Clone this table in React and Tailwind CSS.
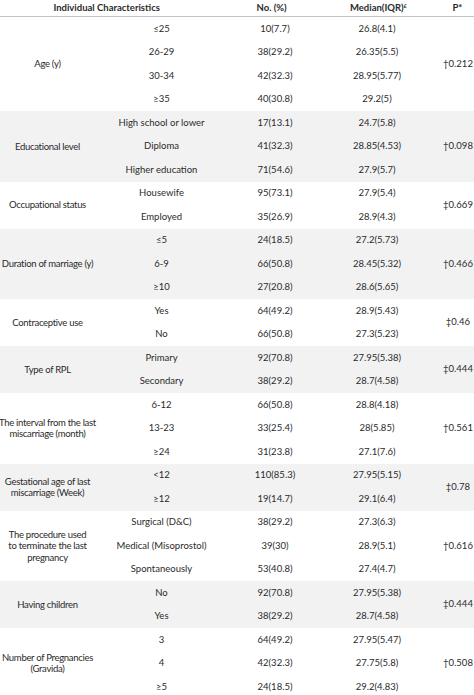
import React from "react";

const groups = [
  {
    label: ["Age (y)"],
    p: "†0.212",
    rows: [
      ["≤25", "10(7.7)", "26.8(4.1)"],
      ["26-29", "38(29.2)", "26.35(5.5)"],
      ["30-34", "42(32.3)", "28.95(5.77)"],
      ["≥35", "40(30.8)", "29.2(5)"],
    ],
  },
  {
    label: ["Educational level"],
    p: "†0.098",
    rows: [
      ["High school or lower", "17(13.1)", "24.7(5.8)"],
      ["Diploma", "41(32.3)", "28.85(4.53)"],
      ["Higher education", "71(54.6)", "27.9(5.7)"],
    ],
  },
  {
    label: ["Occupational status"],
    p: "‡0.669",
    rows: [
      ["Housewife", "95(73.1)", "27.9(5.4)"],
      ["Employed", "35(26.9)", "28.9(4.3)"],
    ],
  },
  {
    label: ["Duration of marriage (y)"],
    p: "†0.466",
    rows: [
      ["≤5", "24(18.5)", "27.2(5.73)"],
      ["6-9", "66(50.8)", "28.45(5.32)"],
      ["≥10", "27(20.8)", "28.6(5.65)"],
    ],
  },
  {
    label: ["Contraceptive use"],
    p: "‡0.46",
    rows: [
      ["Yes", "64(49.2)", "28.9(5.43)"],
      ["No", "66(50.8)", "27.3(5.23)"],
    ],
  },
  {
    label: ["Type of RPL"],
    p: "‡0.444",
    rows: [
      ["Primary", "92(70.8)", "27.95(5.38)"],
      ["Secondary", "38(29.2)", "28.7(4.58)"],
    ],
  },
  {
    label: ["The interval from the last", "miscarriage (month)"],
    p: "†0.561",
    rows: [
      ["6-12", "66(50.8)", "28.8(4.18)"],
      ["13-23", "33(25.4)", "28(5.85)"],
      ["≥24", "31(23.8)", "27.1(7.6)"],
    ],
  },
  {
    label: ["Gestational age of last", "miscarriage (Week)"],
    p: "‡0.78",
    rows: [
      ["<12", "110(85.3)", "27.95(5.15)"],
      ["≥12", "19(14.7)", "29.1(6.4)"],
    ],
  },
  {
    label: ["The procedure used", "to terminate the last", "pregnancy"],
    p: "†0.616",
    rows: [
      ["Surgical (D&C)", "38(29.2)", "27.3(6.3)"],
      ["Medical (Misoprostol)", "39(30)", "28.9(5.1)"],
      ["Spontaneously", "53(40.8)", "27.4(4.7)"],
    ],
  },
  {
    label: ["Having children"],
    p: "‡0.444",
    rows: [
      ["No", "92(70.8)", "27.95(5.38)"],
      ["Yes", "38(29.2)", "28.7(4.58)"],
    ],
  },
  {
    label: ["Number of Pregnancies", "(Gravida)"],
    p: "†0.508",
    rows: [
      ["3", "64(49.2)", "27.95(5.47)"],
      ["4", "42(32.3)", "27.75(5.8)"],
      ["≥5", "24(18.5)", "29.2(4.83)"],
    ],
  },
];

function Group({ g, shaded }) {
  return (
    <div className={"flex " + (shaded ? "bg-[#f2f2f2]" : "bg-white")}>
      <div className="w-[95px] shrink-0 flex flex-col items-center justify-center text-center leading-[11.5px] tracking-[-0.3px]">
        {g.label.map((l) => (
          <span key={l} className="whitespace-nowrap">{l}</span>
        ))}
      </div>
      <div className="flex flex-col">
        {g.rows.map((r) => (
          <div key={r[0] + r[1]} className="flex h-[23.5px] items-center">
            <div className="w-[133px] text-center whitespace-nowrap">{r[0]}</div>
            <div className="w-[94px] text-center whitespace-nowrap">{r[1]}</div>
            <div className="w-[110px] text-center whitespace-nowrap">{r[2]}</div>
          </div>
        ))}
      </div>
      <div className="w-[52px] shrink-0 flex items-center justify-center whitespace-nowrap">
        {g.p}
      </div>
    </div>
  );
}

export default function App() {
  return (
    <div className="w-[474px] h-[695px] overflow-hidden bg-white text-[#2a2a2a] text-[9.5px] font-['Lato',sans-serif]">
      <div className="w-[484px]">
        <div className="flex h-[17px] items-center border-b border-[#c4c4c4] font-bold">
          <div className="w-[216px] text-center">Individual Characteristics</div>
          <div className="w-[118px] text-center">No. (%)</div>
          <div className="w-[98px] text-center">
            Median(IQR)<sup className="text-[5px]">£</sup>
          </div>
          <div className="w-[58px] text-center pl-[4px]">P*</div>
        </div>
        {groups.map((g, i) => (
          <Group key={i} g={g} shaded={i % 2 === 1} />
        ))}
      </div>
    </div>
  );
}
